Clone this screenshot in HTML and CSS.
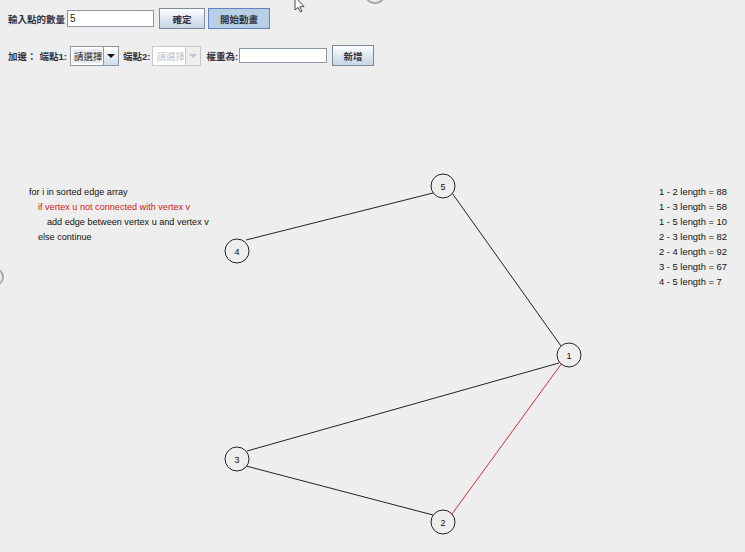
FILE: index.html
```html
<!DOCTYPE html>
<html lang="zh-Hant">
  <head>
    <meta charset="UTF-8" />
    <meta name="viewport" content="width=device-width, initial-scale=1.0" />
    <title>Kruskal</title>
    <link rel="stylesheet" href="styles.css">
  </head>
  <body>
    <header class="toolbar">
      <div class="row row-top">
        <label class="lbl">輸入點的數量</label>
        <input class="field field-count" type="text" value="5" />
        <button class="btn btn-ok">確定</button>
        <button class="btn btn-play">開始動畫</button>
      </div>
      <div class="row row-add">
        <span class="lbl">加邊：</span>
        <span class="lbl lbl-p1">端點1:</span>
        <div class="combo">
          <span class="combo-text">請選擇</span>
          <span class="combo-arrow"></span>
        </div>
        <span class="lbl lbl-p2">端點2:</span>
        <div class="combo disabled">
          <span class="combo-text">請選擇</span>
          <span class="combo-arrow"></span>
        </div>
        <span class="lbl lbl-w">權重為:</span>
        <input class="field field-weight" type="text" value="" />
        <button class="btn btn-add">新增</button>
      </div>
    </header>

    <main class="canvas">
      <svg class="graph" width="745" height="552" viewBox="0 0 745 552">
        <!-- stray nodes cut at the edge -->
        <circle cx="375" cy="-7" r="10" fill="none" stroke="#a8a8a8" stroke-width="2" />
        <circle cx="-5" cy="277" r="8" fill="none" stroke="#a8a8a8" stroke-width="2" />

        <line x1="246" y1="240" x2="433" y2="193" stroke="#222" />
        <line x1="452" y1="193" x2="561" y2="346" stroke="#222" />
        <line x1="247" y1="451" x2="559" y2="363" stroke="#222" />
        <line x1="246" y1="466" x2="433" y2="515" stroke="#222" />
        <line x1="562" y1="363" x2="452" y2="514" stroke="#d03030" />

        <g class="node"><circle cx="443" cy="186" r="12" /><text x="443" y="189.5">5</text></g>
        <g class="node"><circle cx="237" cy="251" r="12" /><text x="237" y="254.5">4</text></g>
        <g class="node"><circle cx="569" cy="355" r="12" /><text x="569" y="358.5">1</text></g>
        <g class="node"><circle cx="237" cy="459" r="12" /><text x="237" y="462.5">3</text></g>
        <g class="node"><circle cx="443" cy="522" r="12" /><text x="443" y="525.5">2</text></g>

        <!-- mouse pointer -->
        <path d="M295 -3 L295 10 L298 7.5 L300.5 12 L302 11.2 L299.8 6.8 L304 6.5 Z" fill="#fff" stroke="#222" stroke-width="0.8" />
      </svg>

      <div class="pseudo">
        <p>for i in sorted edge array</p>
        <p class="in1 hl">if vertex u not connected with vertex v</p>
        <p class="in2">add edge between vertex u and vertex v</p>
        <p class="in1">else continue</p>
      </div>

      <ul class="edges">
        <li>1 - 2 length = 88</li>
        <li>1 - 3 length = 58</li>
        <li>1 - 5 length = 10</li>
        <li>2 - 3 length = 82</li>
        <li>2 - 4 length = 92</li>
        <li>3 - 5 length = 67</li>
        <li>4 - 5 length = 7</li>
      </ul>
    </main>
  </body>
</html>
```

FILE: styles.css
```css
html, body {
  margin: 0;
  padding: 0;
  width: 745px;
  height: 552px;
  overflow: hidden;
  background-color: #eeeeee;
  font-family: "Liberation Sans", "Noto Sans CJK TC", sans-serif;
  color: #222;
}

.toolbar {
  position: relative;
  z-index: 2;
  padding: 8px 0 0 8px;
}

.row {
  display: flex;
  align-items: center;
  height: 21px;
}

.row-add {
  margin-top: 16px;
}

.lbl {
  font-size: 9.5px;
  font-weight: bold;
  color: #333344;
  white-space: nowrap;
}

.row-top .lbl {
  width: 59px;
}

.field {
  box-sizing: border-box;
  border: 1px solid #8a97a6;
  background: #fff;
  font-family: "Liberation Sans", "Noto Sans CJK TC", sans-serif;
  font-size: 10px;
  color: #222;
  padding: 0 2px;
  margin: 0;
  outline: none;
}

.field-count {
  width: 87px;
  height: 17px;
}

.field-weight {
  width: 88px;
  height: 15px;
  margin-left: 1px;
}

.btn {
  box-sizing: border-box;
  height: 21px;
  margin: 0;
  padding: 0;
  border: 1px solid #7a8a99;
  background: linear-gradient(#ffffff, #dce6f0 55%, #c6d6e6);
  font-family: "Noto Sans CJK TC", sans-serif;
  font-size: 9.5px;
  font-weight: bold;
  color: #333344;
}

.btn-ok {
  width: 46px;
  margin-left: 5px;
}

.btn-play {
  width: 62px;
  margin-left: 3px;
  background: #b8cfe5;
  border-color: #6382bf;
}

.btn-add {
  width: 42px;
  margin-left: 5px;
}

.lbl-p1 {
  margin-left: 3px;
}

.lbl-p2 {
  margin-left: 4px;
}

.lbl-w {
  margin-left: 5px;
}

.combo {
  box-sizing: border-box;
  display: flex;
  width: 49px;
  height: 20px;
  margin-left: 3px;
  border: 1px solid #8a97a6;
  background: #fff;
}

.combo-text {
  flex: 1;
  min-width: 0;
  overflow: hidden;
  margin: 2px 1px 2px 2px;
  padding-left: 1px;
  background: #e6edf5;
  font-family: "Noto Sans CJK TC", sans-serif;
  font-size: 9.5px;
  line-height: 14px;
  white-space: nowrap;
  color: #222;
}

.combo-arrow {
  position: relative;
  flex: none;
  width: 14px;
  border-left: 1px solid #8a97a6;
  background: linear-gradient(#ffffff, #d0dce8);
}

.combo-arrow::after {
  content: "";
  position: absolute;
  left: 3px;
  top: 7px;
  border-left: 4px solid transparent;
  border-right: 4px solid transparent;
  border-top: 4px solid #111;
}

.combo.disabled {
  margin-left: 2px;
  border-color: #c2c8cf;
}

.combo.disabled .combo-text {
  background: #fff;
  color: #b8c4d0;
}

.combo.disabled .combo-arrow {
  border-left-color: #c2c8cf;
  background: #eeeeee;
}

.combo.disabled .combo-arrow::after {
  border-top-color: #b8c4d0;
}

.canvas {
  position: absolute;
  left: 0;
  top: 0;
  width: 745px;
  height: 552px;
}

.graph {
  position: absolute;
  left: 0;
  top: 0;
}

.node circle {
  fill: #eeeeee;
  stroke: #222;
  stroke-width: 1;
}

.node text {
  font-family: "Liberation Sans", sans-serif;
  font-size: 9px;
  text-anchor: middle;
  fill: #111;
}

.pseudo {
  position: absolute;
  left: 29px;
  top: 185px;
  font-size: 9.1px;
  color: #111;
}

.pseudo p {
  margin: 0;
  height: 15px;
  line-height: 15px;
  white-space: nowrap;
}

.pseudo .in1 {
  padding-left: 9px;
}

.pseudo .in2 {
  padding-left: 18px;
}

.pseudo .hl {
  color: #d02020;
}

.edges {
  position: absolute;
  left: 659px;
  top: 184px;
  margin: 0;
  padding: 0;
  list-style: none;
  font-size: 9.4px;
  color: #111;
}

.edges li {
  height: 15px;
  line-height: 15px;
  white-space: nowrap;
}
```
